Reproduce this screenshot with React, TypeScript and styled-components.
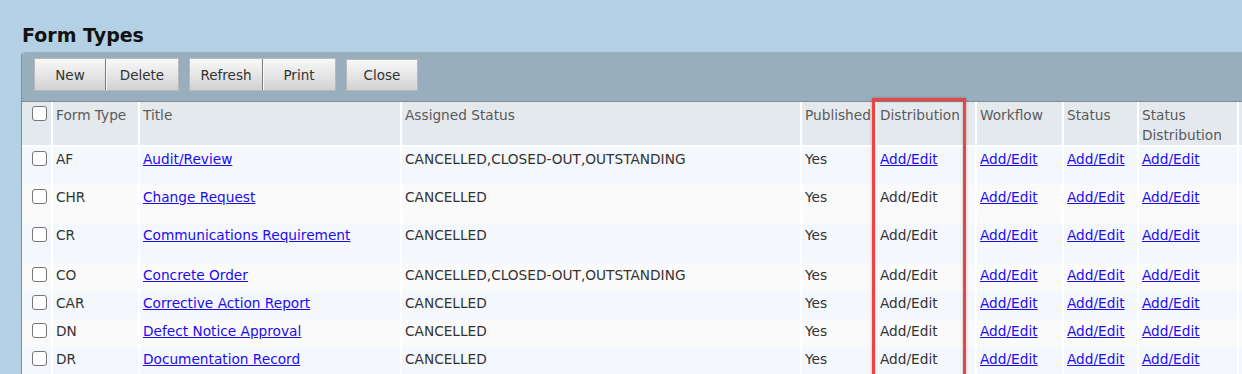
import React from 'react'
import styled, { createGlobalStyle } from 'styled-components'

const GlobalStyle = createGlobalStyle`
    * { box-sizing: border-box; }
    html, body {
        margin: 0;
        padding: 0;
        background: #b3d0e4;
        overflow: hidden;
        font-family: "DejaVu Sans", Verdana, sans-serif;
    }
`
const DivPage = styled.div`
    width: 1242px;
    height: 374px;
    padding: 23px 0 0 21px;
    overflow: hidden;
`
const H1Title = styled.h1`
    margin: 0 0 5px 1px;
    font-size: 19px;
    line-height: 24px;
    font-weight: bold;
    color: #111;
`
const DivPanel = styled.div`
    position: relative;
    width: 1340px;
    border-left: 1px solid #7f8e99;
    border-top-left-radius: 4px;
    background: #fff;
`
const DivToolbar = styled.div`
    display: flex;
    gap: 10px;
    height: 50px;
    padding: 6px 0 0 12px;
    background: #98aebd;
    border-bottom: 1px solid #7e8d98;
    border-top-left-radius: 4px;
`
const DivButtonGroup = styled.div<{ $single?: boolean }>`
    display: flex;
    height: ${p => (p.$single ? 32 : 33)}px;
    margin-top: ${p => (p.$single ? 1 : 0)}px;
    border: 1px solid #b9b9b9;
    background: #e6e6e6;
`
const ButtonTool = styled.button<{ $width: number; $divider?: boolean }>`
    width: ${p => p.$width}px;
    height: 100%;
    padding: 0;
    border: 0;
    border-left: ${p => (p.$divider ? '1px solid #7b7b7b' : '0')};
    box-shadow: ${p => (p.$divider ? 'inset 1px 0 0 #fafafa' : 'none')};
    background: linear-gradient(#f8f8f8, #e8e8e8 45%, #d2d2d2);
    font-family: inherit;
    font-size: 13.5px;
    color: #333;
`
const TableGrid = styled.table`
    table-layout: fixed;
    border-collapse: separate;
    border-spacing: 0;
    width: 1339px;
    font-size: 13.7px;
    line-height: 18px;
`
const ThHead = styled.th<{ $first?: boolean }>`
    height: 45px;
    padding: 3px 3px 0;
    vertical-align: top;
    text-align: left;
    font-weight: normal;
    line-height: 20px;
    color: #5a5a5a;
    background: #e4e9ee;
    border-left: ${p => (p.$first ? '0' : '2px solid #fff')};
    border-bottom: 2px solid #fff;
`
const TrRow = styled.tr<{ $odd: boolean; $height: number }>`
    height: ${p => p.$height}px;
    background: ${p => (p.$odd ? '#f4f7fb' : '#fafafa')};
`
const TdCell = styled.td<{ $first?: boolean }>`
    padding: 3px 3px 0;
    vertical-align: top;
    color: #333;
    white-space: nowrap;
    overflow: hidden;
    border-left: ${p => (p.$first ? '0' : '2px solid #fff')};
`
const InputCheck = styled.input`
    appearance: none;
    display: block;
    width: 15px;
    height: 15px;
    margin: 1px 0 0 7px;
    border: 1px solid #767676;
    border-radius: 3px;
    background: #fff;
`
const ALink = styled.a`
    color: #1d0cf0;
    text-decoration: underline;
`
const DivHighlight = styled.div`
    position: absolute;
    left: 850px;
    top: 46px;
    width: 94px;
    height: 300px;
    border: 3px solid #ef4242;
    box-shadow: inset 0 0 3px rgba(0, 0, 0, 0.25), 0 0 3px rgba(0, 0, 0, 0.25);
    pointer-events: none;
`

const columns = [29, 87, 262, 400, 75, 100, 87, 75, 100, 124]

const rows = [
    { code: 'AF', title: 'Audit/Review', status: 'CANCELLED,CLOSED-OUT,OUTSTANDING', distLink: true, height: 38 },
    { code: 'CHR', title: 'Change Request', status: 'CANCELLED', distLink: false, height: 38 },
    { code: 'CR', title: 'Communications Requirement', status: 'CANCELLED', distLink: false, height: 40 },
    { code: 'CO', title: 'Concrete Order', status: 'CANCELLED,CLOSED-OUT,OUTSTANDING', distLink: false, height: 28 },
    { code: 'CAR', title: 'Corrective Action Report', status: 'CANCELLED', distLink: false, height: 28 },
    { code: 'DN', title: 'Defect Notice Approval', status: 'CANCELLED', distLink: false, height: 28 },
    { code: 'DR', title: 'Documentation Record', status: 'CANCELLED', distLink: false, height: 28 },
]

function App() {
    return (
        <DivPage>
            <GlobalStyle />
            <H1Title>Form Types</H1Title>
            <DivPanel>
                <DivToolbar>
                    <DivButtonGroup>
                        <ButtonTool $width={70}>New</ButtonTool>
                        <ButtonTool $width={73} $divider>Delete</ButtonTool>
                    </DivButtonGroup>
                    <DivButtonGroup>
                        <ButtonTool $width={72}>Refresh</ButtonTool>
                        <ButtonTool $width={73} $divider>Print</ButtonTool>
                    </DivButtonGroup>
                    <DivButtonGroup $single>
                        <ButtonTool $width={70}>Close</ButtonTool>
                    </DivButtonGroup>
                </DivToolbar>
                <TableGrid>
                    <colgroup>
                        {columns.map((w, i) => <col key={i} style={{ width: w }} />)}
                    </colgroup>
                    <thead>
                        <tr>
                            <ThHead $first><InputCheck type="checkbox" /></ThHead>
                            <ThHead>Form Type</ThHead>
                            <ThHead>Title</ThHead>
                            <ThHead>Assigned Status</ThHead>
                            <ThHead>Published</ThHead>
                            <ThHead>Distribution</ThHead>
                            <ThHead>Workflow</ThHead>
                            <ThHead>Status</ThHead>
                            <ThHead>Status Distribution</ThHead>
                            <ThHead></ThHead>
                        </tr>
                    </thead>
                    <tbody>
                        {rows.map((row, i) => (
                            <TrRow key={row.code} $odd={i % 2 === 0} $height={row.height}>
                                <TdCell $first><InputCheck type="checkbox" /></TdCell>
                                <TdCell>{row.code}</TdCell>
                                <TdCell><ALink href="#">{row.title}</ALink></TdCell>
                                <TdCell>{row.status}</TdCell>
                                <TdCell>Yes</TdCell>
                                <TdCell>{row.distLink ? <ALink href="#">Add/Edit</ALink> : 'Add/Edit'}</TdCell>
                                <TdCell><ALink href="#">Add/Edit</ALink></TdCell>
                                <TdCell><ALink href="#">Add/Edit</ALink></TdCell>
                                <TdCell><ALink href="#">Add/Edit</ALink></TdCell>
                                <TdCell></TdCell>
                            </TrRow>
                        ))}
                    </tbody>
                </TableGrid>
                <DivHighlight />
            </DivPanel>
        </DivPage>
    )
}

export default App
